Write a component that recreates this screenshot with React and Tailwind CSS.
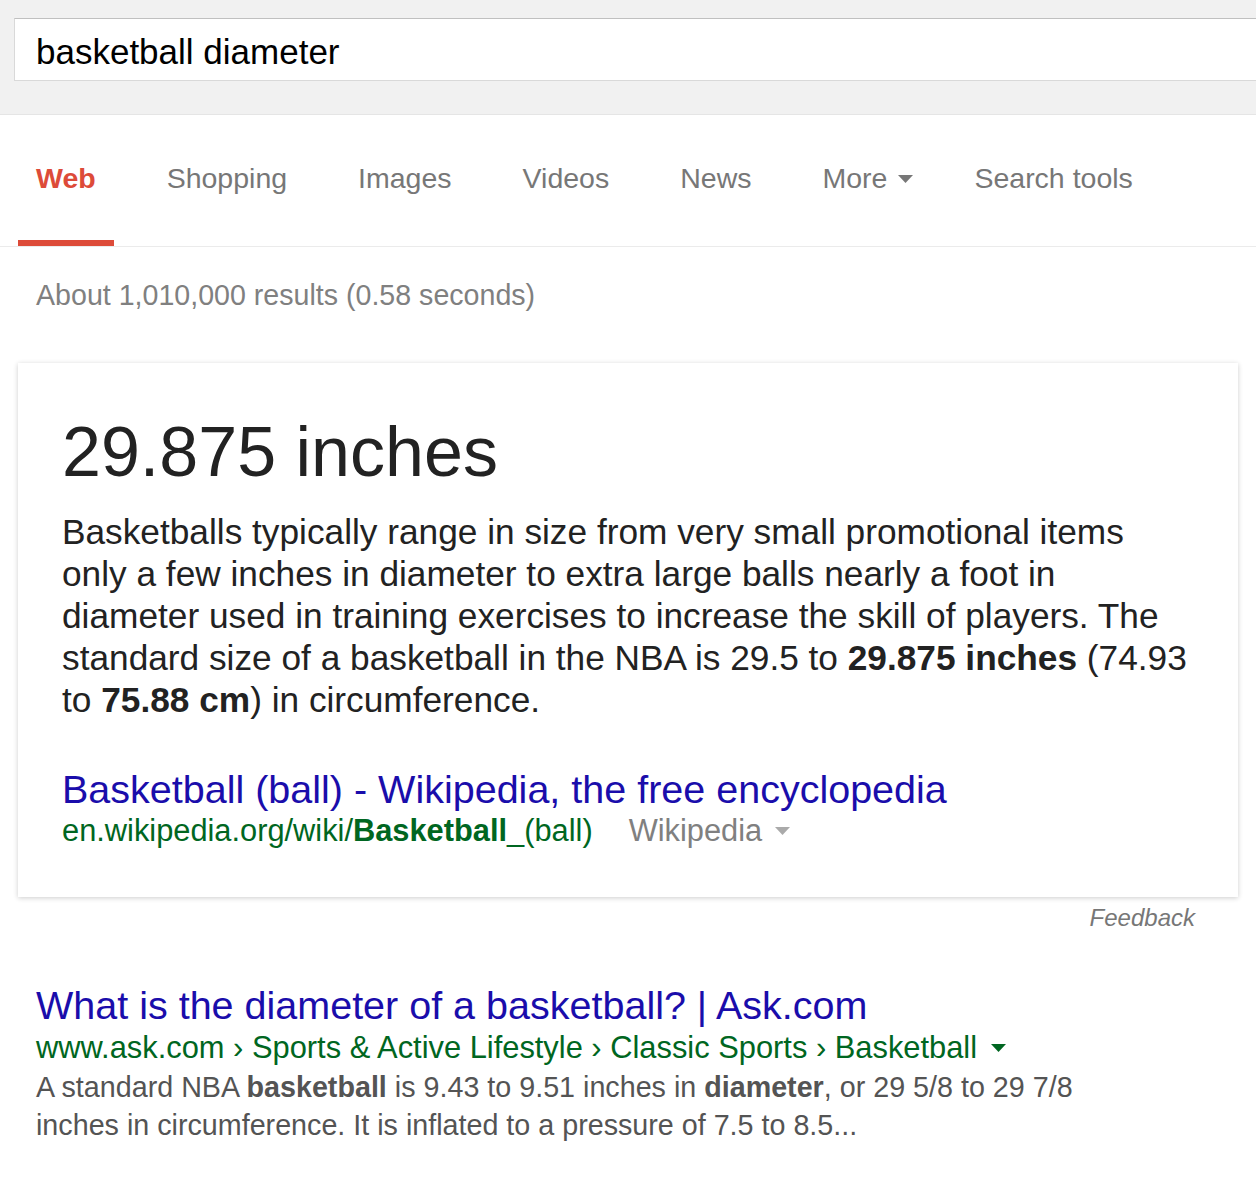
import React from "react";

const tabs = ["Web", "Shopping", "Images", "Videos", "News", "More", "Search tools"];

const Caret = ({ color = "#777" }) => (
  <svg width="15" height="8" viewBox="0 0 15 8" className="inline-block">
    <path d="M0 0 L15 0 L7.5 8 Z" fill={color} />
  </svg>
);

const App = () => {
  return (
    <div className="min-h-[1182px] bg-white font-['Liberation_Sans',Arial,sans-serif]">
      {/* Search header */}
      <div className="h-[115px] bg-[#f1f1f1] border-b border-[#e5e5e5] pt-[18px] pl-[14px]">
        <div className="h-[63px] bg-white border border-[#d9d9d9] border-t-[#c0c0c0] border-r-0 pl-[21px] pt-[3px] flex items-center">
          <span className="text-[35px] text-black leading-none">basketball diameter</span>
        </div>
      </div>

      {/* Tabs */}
      <div className="h-[132px] border-b border-[#ebebeb] pl-[18px] flex gap-[35px]">
        {tabs.map((t, i) => (
          <div
            key={t}
            className={
              i === 0
                ? "h-full px-[18px] flex items-center border-b-[6px] border-[#dd4b39] pt-[2px]"
                : t === "More"
                ? "h-full pl-[18px] pr-[8px] flex items-center pb-[4px]"
                : "h-full px-[18px] flex items-center pb-[4px]"
            }
          >
            <span
              className={
                i === 0
                  ? "text-[28.5px] font-bold text-[#dd4b39] leading-none"
                  : "text-[28.5px] text-[#777] leading-none flex items-center gap-[11px]"
              }
            >
              {t}
              {t === "More" && <Caret />}
            </span>
          </div>
        ))}
      </div>

      {/* Result stats */}
      <div className="pl-[36px] pt-[32px] text-[28.6px] leading-[32px] text-[#808080]">
        About 1,010,000 results (0.58 seconds)
      </div>

      {/* Answer card */}
      <div className="mt-[52px] ml-[18px] mr-[18px] bg-white shadow-[0_1px_5px_rgba(0,0,0,0.2)] pl-[44px] pr-[40px] pt-[49px] pb-[47px]">
        <div className="text-[70px] leading-[80px] text-[#222]">29.875 inches</div>
        <p className="mt-[19px] text-[35.25px] leading-[42px] text-[#222]">
          Basketballs typically range in size from very small promotional items only a few inches in diameter to extra
          large balls nearly a foot in diameter used in training exercises to increase the skill of players. The standard
          size of a basketball in the NBA is 29.5 to <b>29.875 inches</b> (74.93 to <b>75.88 cm</b>) in circumference.
        </p>
        <div className="mt-[45px]">
          <a href="#" className="block text-[39.5px] leading-[46px] text-[#1a0dab]">
            Basketball (ball) - Wikipedia, the free encyclopedia
          </a>
          <div className="flex items-center text-[30.8px] leading-[38px]">
            <span className="text-[#006621]">
              en.wikipedia.org/wiki/<b>Basketball</b>_(ball)
            </span>
            <span className="ml-[36px] text-[#808080]">Wikipedia</span>
            <span className="ml-[13px] flex items-center">
              <Caret color="#aaa" />
            </span>
          </div>
        </div>
      </div>

      <div className="pr-[61px] pt-[5px] text-right text-[24px] leading-[32px] italic text-[#777]">Feedback</div>

      {/* Organic result */}
      <div className="pl-[36px] pt-[49px]">
        <a href="#" className="block text-[39.5px] leading-[44px] text-[#1a0dab]">
          What is the diameter of a basketball? | Ask.com
        </a>
        <div className="mt-[2px] flex items-center text-[30.85px] leading-[38px] text-[#006621]">
          <span>www.ask.com › Sports &amp; Active Lifestyle › Classic Sports › Basketball</span>
          <span className="ml-[14px] flex items-center">
            <Caret color="#006621" />
          </span>
        </div>
        <p className="mt-[1px] text-[28.7px] leading-[38px] text-[#545454] max-w-[1100px]">
          A standard NBA <b>basketball</b> is 9.43 to 9.51 inches in <b>diameter</b>, or 29 5/8 to 29 7/8 inches in
          circumference. It is inflated to a pressure of 7.5 to 8.5...
        </p>
      </div>
    </div>
  );
};

export default App;
